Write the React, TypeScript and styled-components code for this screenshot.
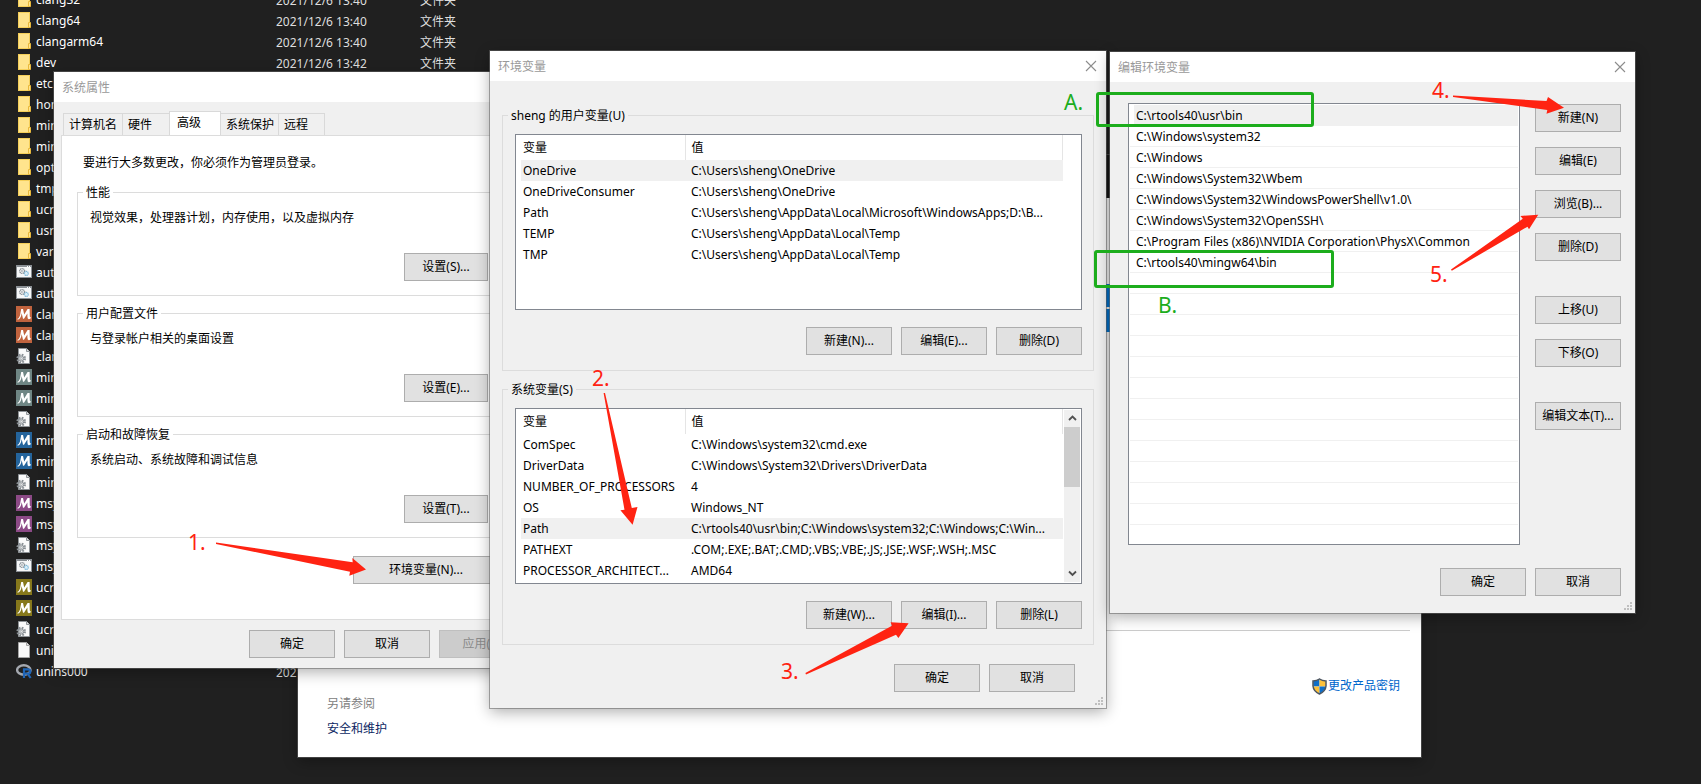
import type { ReactNode } from "react";
import styled, { createGlobalStyle } from "styled-components";

const GlobalStyle = createGlobalStyle`
  *, *::before, *::after { box-sizing: border-box; }
  body { margin: 0; background: #202020; }
  body, button, table {
    font-family: "Noto Sans", "Noto Sans CJK SC", sans-serif;
    font-size: 12px;
    line-height: 16px;
    color: #000;
  }
  button { cursor: default; }
`;

/* ---------- desktop and window frames ---------- */

const Desktop = styled.main`
  position: relative;
  height: 100vh;
  overflow: hidden;
  background: #202020;
`;

const WindowFrame = styled.section<{ $x: number; $y: number; $w: number; $h: number }>`
  position: absolute;
  left: ${(p) => p.$x}px;
  top: ${(p) => p.$y}px;
  width: ${(p) => p.$w}px;
  height: ${(p) => p.$h}px;
  display: flex;
  flex-direction: column;
  background: #f0f0f0;
  box-shadow: 0 0 0 1px rgba(100, 100, 100, 0.55), 0 4px 14px rgba(0, 0, 0, 0.32);
`;

const TitleBar = styled.header`
  flex: none;
  height: 30px;
  display: flex;
  align-items: center;
  justify-content: space-between;
  padding: 0 9px 0 8px;
  background: #fff;
`;

const Title = styled.h1`
  margin: 0;
  padding-top: 2px;
  font-size: 12px;
  font-weight: 400;
  line-height: 16px;
  color: #999;
`;

const CloseButton = styled.button`
  display: flex;
  padding: 0;
  border: 0;
  background: none;
`;

const Grip = styled.svg`
  position: absolute;
  right: 2px;
  bottom: 2px;
`;

const PushButton = styled.button<{ $width?: number }>`
  flex: none;
  width: ${(p) => p.$width ?? 86}px;
  height: 28px;
  padding: 0;
  border: 1px solid #adadad;
  background: #e1e1e1;
  white-space: nowrap;
  &:disabled {
    border-color: #bfbfbf;
    background: #ccc;
    color: #8a8a8a;
  }
`;

const ButtonRow = styled.div`
  display: flex;
  justify-content: flex-end;
  gap: 9px;
`;

/* ---------- file list ---------- */

const FileTable = styled.table`
  table-layout: fixed;
  width: 520px;
  margin-top: -11px;
  border-collapse: collapse;
`;

const FileRow = styled.tr`
  height: 21px;
`;

const FileCell = styled.td`
  height: 21px;
  padding: 2px 0 0;
  white-space: nowrap;
  color: #dedede;
`;

const FileName = styled.span`
  display: flex;
  align-items: flex-start;
  gap: 4px;
  height: 19px;
  padding-left: 16px;
  line-height: 18px;
  color: #fff;
`;

type Kind = "folder" | "batch" | "config" | "page" | "rlogo" | { tile: string };

function FileIcon({ kind }: { kind: Kind }) {
  if (typeof kind === "object") {
    return (
      <svg width="16" height="16" viewBox="0 0 16 16">
        <rect width="16" height="16" fill={kind.tile} />
        <path d="M1 13.2 Q3 12.8 4 9.5 L5.2 3 H7 L8.2 8.4 L11.6 3 H13.6 L13.8 10.6 Q14.2 11.8 15.2 11.2 Q14.6 13.2 12.8 13.2 Q11.4 13 11.4 10.5 L11.4 7.4 L8 12.8 H7 L5.7 7.2 Q4.8 12.6 2.4 13.4 Z" fill="#fff" />
      </svg>
    );
  }
  if (kind === "folder") {
    return (
      <svg width="16" height="16" viewBox="0 0 16 16">
        <rect x="2" width="12" height="16" fill="#ffe48d" />
        <rect x="2.5" y="0.5" width="11" height="15" fill="none" stroke="#f5cf59" />
        <path d="M12.5 15.5 V10.5 H14.5 V15.5 Z" fill="#ffe48d" stroke="#e9b93c" />
      </svg>
    );
  }
  if (kind === "batch") {
    return (
      <svg width="16" height="16" viewBox="0 0 16 16">
        <rect x="0.5" y="1.5" width="15" height="12" fill="#f6f7f8" stroke="#8b9095" />
        <path d="M1 2.5 H15" stroke="#8b9095" />
        <path d="M11 2.5 H12 M13 2.5 H14" stroke="#fff" />
        <circle cx="6.2" cy="7" r="2.5" fill="none" stroke="#7d858b" strokeWidth="1.2" strokeDasharray="1.2 0.6" />
        <circle cx="6.2" cy="7" r="1" fill="none" stroke="#9aa1a6" strokeWidth="0.7" />
        <circle cx="10.3" cy="9.4" r="2" fill="#d9eef9" stroke="#74b2d4" strokeWidth="1.1" strokeDasharray="1.1 0.5" />
      </svg>
    );
  }
  if (kind === "config") {
    return (
      <svg width="16" height="16" viewBox="0 0 16 16">
        <path d="M2.5 0.5 H10.5 L13.5 3.5 V15.5 H2.5 Z" fill="#fafafa" stroke="#8f9498" />
        <path d="M10.5 0.5 V3.5 H13.5" fill="#ddd" stroke="#8f9498" />
        <circle cx="5.2" cy="10.5" r="3.8" fill="none" stroke="#8a9095" strokeWidth="2" strokeDasharray="1.7 1.3" />
        <circle cx="5.2" cy="10.5" r="2.6" fill="#d5d8da" stroke="#8a9095" />
        <circle cx="5.2" cy="10.5" r="1" fill="#fff" stroke="#888e92" strokeWidth="0.6" />
      </svg>
    );
  }
  if (kind === "page") {
    return (
      <svg width="16" height="16" viewBox="0 0 16 16">
        <path d="M2.5 0.5 H10.5 L13.5 3.5 V15.5 H2.5 Z" fill="#fafafa" stroke="#a5a5a5" />
        <path d="M10.5 0.5 V3.5 H13.5" fill="#e5e5e5" stroke="#a5a5a5" />
      </svg>
    );
  }
  return (
    <svg width="16" height="16" viewBox="0 0 16 16">
      <ellipse cx="7.8" cy="7" rx="6.7" ry="4.7" fill="none" stroke="#a4a8af" strokeWidth="2.4" />
      <path d="M8 15 V6.4 H12 Q14.3 6.4 14.3 8.4 Q14.3 10.5 12 10.6 H9 M11.6 10.6 L14.6 15" fill="none" stroke="#1f65b7" strokeWidth="2.2" />
    </svg>
  );
}

const CLANG: Kind = { tile: "#c0633e" };
const MINGW: Kind = { tile: "#6f8684" };
const MINGW64: Kind = { tile: "#24649c" };
const MSYS: Kind = { tile: "#8c4a86" };
const UCRT: Kind = { tile: "#86781b" };

const files: { name: string; kind: Kind; date?: string; type?: string }[] = [
  { name: "clang32", kind: "folder", date: "2021/12/6 13:40", type: "文件夹" },
  { name: "clang64", kind: "folder", date: "2021/12/6 13:40", type: "文件夹" },
  { name: "clangarm64", kind: "folder", date: "2021/12/6 13:40", type: "文件夹" },
  { name: "dev", kind: "folder", date: "2021/12/6 13:42", type: "文件夹" },
  { name: "etc", kind: "folder" },
  { name: "home", kind: "folder" },
  { name: "mingw32", kind: "folder" },
  { name: "mingw64", kind: "folder" },
  { name: "opt", kind: "folder" },
  { name: "tmp", kind: "folder" },
  { name: "ucrt64", kind: "folder" },
  { name: "usr", kind: "folder" },
  { name: "var", kind: "folder" },
  { name: "autorebase", kind: "batch" },
  { name: "autorebase", kind: "batch" },
  { name: "clang64", kind: CLANG },
  { name: "clang64", kind: CLANG },
  { name: "clang64", kind: "config" },
  { name: "mingw32", kind: MINGW },
  { name: "mingw32", kind: MINGW },
  { name: "mingw32", kind: "config" },
  { name: "mingw64", kind: MINGW64 },
  { name: "mingw64", kind: MINGW64 },
  { name: "mingw64", kind: "config" },
  { name: "msys2", kind: MSYS },
  { name: "msys2", kind: MSYS },
  { name: "msys2", kind: "config" },
  { name: "msys2", kind: "batch" },
  { name: "ucrt64", kind: UCRT },
  { name: "ucrt64", kind: UCRT },
  { name: "ucrt64", kind: "config" },
  { name: "unins", kind: "page" },
  { name: "unins000", kind: "rlogo", date: "2021/12/6 13:40" },
];

function FileList() {
  return (
    <FileTable>
      <colgroup>
        <col style={{ width: 276 }} />
        <col style={{ width: 144 }} />
        <col />
      </colgroup>
      <tbody>
        {files.map((f, i) => (
          <FileRow key={i}>
            <FileCell>
              <FileName>
                <FileIcon kind={f.kind} />
                {f.name}
              </FileName>
            </FileCell>
            <FileCell>{f.date}</FileCell>
            <FileCell>{f.type}</FileCell>
          </FileRow>
        ))}
      </tbody>
    </FileTable>
  );
}

/* ---------- system information window ---------- */

const SystemFrame = styled(WindowFrame)`
  background: #fff;
`;

const DarkBar = styled.div`
  flex: none;
  height: 43px;
  background: #161616;
`;

const SystemContent = styled.div`
  flex: 1;
  display: flex;
  flex-direction: column;
  padding: 86px 11px 0 29px;
`;

const BlueBanner = styled.div`
  height: 48px;
  margin-left: 360px;
  background: linear-gradient(#0078d7 23px, #fff 23px 25px, #0078d7 25px);
`;

const Divider = styled.hr`
  width: 100%;
  height: 1px;
  margin: 298px 0 0;
  border: 0;
  background: #ccc;
`;

const SystemFooter = styled.div`
  display: flex;
  justify-content: space-between;
  padding: 47px 10px 0 0;
`;

const SeeAlso = styled.nav`
  display: flex;
  flex-direction: column;
  gap: 9px;
  padding-top: 18px;
  color: #808080;
`;

const NavyLink = styled.a`
  color: #0c1f62;
  text-decoration: none;
`;

const KeyLink = styled.a`
  display: flex;
  gap: 1px;
  height: 18px;
  color: #0066cc;
  text-decoration: none;
`;

function Shield() {
  return (
    <svg width="15" height="17" viewBox="0 0 15 17">
      <defs>
        <clipPath id="shield-shape">
          <path d="M7.5 1.2 Q10 3 13.8 3 V8 Q13.5 13 7.5 15.8 Q1.5 13 1.2 8 V3 Q5 3 7.5 1.2 Z" />
        </clipPath>
      </defs>
      <g clipPath="url(#shield-shape)">
        <rect width="7.5" height="8.5" fill="#0f6fc9" />
        <rect x="7.5" width="7.5" height="8.5" fill="#fdc13b" />
        <rect y="8.5" width="7.5" height="8.5" fill="#fdc13b" />
        <rect x="7.5" y="8.5" width="7.5" height="8.5" fill="#0f6fc9" />
      </g>
      <path d="M7.5 1 Q10 2.9 14 2.9 V8 Q13.6 13.2 7.5 16 Q1.4 13.2 1 8 V2.9 Q5 2.9 7.5 1 Z" fill="none" stroke="#4c5560" strokeWidth="1.5" />
    </svg>
  );
}

function SystemWindow() {
  return (
    <SystemFrame $x={298} $y={155} $w={1123} $h={602}>
      <DarkBar />
      <SystemContent>
        <BlueBanner />
        <Divider />
        <SystemFooter>
          <SeeAlso>
            <span>另请参阅</span>
            <NavyLink href="#security">安全和维护</NavyLink>
          </SeeAlso>
          <KeyLink href="#key">
            <Shield />
            更改产品密钥
          </KeyLink>
        </SystemFooter>
      </SystemContent>
    </SystemFrame>
  );
}

/* ---------- system properties window ---------- */

const TabStrip = styled.div`
  display: flex;
  align-items: flex-end;
  height: 24px;
  margin: 9px 0 0 9px;
`;

const Tab = styled.button<{ $active?: boolean; $width: number }>`
  width: ${(p) => p.$width}px;
  height: ${(p) => (p.$active ? 25 : 22)}px;
  margin: ${(p) => (p.$active ? "0 0 -1px -1px" : "0 0 0 -1px")};
  padding: ${(p) => (p.$active ? "0 0 3px 7px" : "1px 0 0 5px")};
  border: 1px solid #d9d9d9;
  border-bottom: 0;
  background: ${(p) => (p.$active ? "#fff" : "#f0f0f0")};
  text-align: left;
  white-space: nowrap;
  &:first-child { margin-left: 0; }
`;

const TabPanel = styled.div`
  display: flex;
  flex-direction: column;
  height: 485px;
  margin: 0 8px 0 7px;
  padding: 19px 14px 0 15px;
  border: 1px solid #dcdcdc;
  background: #fff;
`;

const Intro = styled.p`
  margin: 0 0 12px 6px;
`;

const GroupBox = styled.fieldset`
  min-width: 0;
  margin: 0;
  border: 1px solid #dcdcdc;
`;

const Legend = styled.legend`
  padding: 2px 3px 0;
  line-height: 16px;
`;

const SettingsGroup = styled(GroupBox)`
  display: flex;
  flex-direction: column;
  height: 113px;
  margin-bottom: 8px;
  padding: 9px 22px 14px 5px;
`;

const SettingsBody = styled.div`
  display: flex;
  flex-direction: column;
  justify-content: space-between;
  height: 71px;
  padding-left: 7px;
`;

const GroupText = styled.p`
  margin: 0;
`;

const EndButton = styled(PushButton)`
  align-self: flex-end;
`;

const EnvButton = styled(PushButton)`
  align-self: flex-end;
  margin: 10px 12px 0 0;
`;

const PropertiesFooter = styled(ButtonRow)`
  padding: 10px 9px 0 0;
`;

const settings = [
  { legend: "性能", text: "视觉效果，处理器计划，内存使用，以及虚拟内存", button: "设置(S)..." },
  { legend: "用户配置文件", text: "与登录帐户相关的桌面设置", button: "设置(E)..." },
  { legend: "启动和故障恢复", text: "系统启动、系统故障和调试信息", button: "设置(T)..." },
];

function PropertiesWindow() {
  return (
    <WindowFrame $x={54} $y={72} $w={480} $h={596}>
      <TitleBar>
        <Title>系统属性</Title>
      </TitleBar>
      <TabStrip role="tablist">
        <Tab role="tab" $width={60}>计算机名</Tab>
        <Tab role="tab" $width={48}>硬件</Tab>
        <Tab role="tab" $width={52} $active aria-selected>高级</Tab>
        <Tab role="tab" $width={59}>系统保护</Tab>
        <Tab role="tab" $width={47}>远程</Tab>
      </TabStrip>
      <TabPanel role="tabpanel">
        <Intro>要进行大多数更改，你必须作为管理员登录。</Intro>
        {settings.map((s) => (
          <SettingsGroup key={s.legend}>
            <Legend>{s.legend}</Legend>
            <SettingsBody>
              <GroupText>{s.text}</GroupText>
              <EndButton $width={84}>{s.button}</EndButton>
            </SettingsBody>
          </SettingsGroup>
        ))}
        <EnvButton $width={146}>环境变量(N)...</EnvButton>
      </TabPanel>
      <PropertiesFooter>
        <PushButton>确定</PushButton>
        <PushButton>取消</PushButton>
        <PushButton disabled>应用(A)</PushButton>
      </PropertiesFooter>
    </WindowFrame>
  );
}

/* ---------- environment variables window ---------- */

const VariablesBody = styled.div`
  display: flex;
  flex-direction: column;
  gap: 9px;
  padding: 25px 12px 0 12px;
`;

const VariablesGroup = styled(GroupBox)`
  display: flex;
  flex-direction: column;
  height: 265px;
  padding: 10px 11px 0 12px;
`;

const GroupLegend = styled(Legend)`
  margin-left: -7px;
`;

const ListBox = styled.div`
  display: flex;
  height: 176px;
  margin-bottom: 17px;
  padding: 0 3px 1px 5px;
  border: 1px solid #828790;
  background: #fff;
  overflow: hidden;
`;

const VariableTable = styled.table`
  flex: none;
  table-layout: fixed;
  width: 542px;
  height: 1px;
  border-collapse: collapse;
`;

const HeadCell = styled.th`
  height: 25px;
  padding: 0 6px 0 2px;
  border-right: 1px solid #e5e5e5;
  font-weight: 400;
  text-align: left;
`;

const VariableRow = styled.tr<{ $selected: boolean }>`
  background: ${(p) => (p.$selected ? "#f0f0f0" : "transparent")};
`;

const VariableCell = styled.td`
  height: 21px;
  padding: 1px 0 0 2px;
  white-space: nowrap;
`;

const ValueHead = styled(HeadCell)`
  padding-left: 6px;
`;

const ValueCell = styled(VariableCell)`
  padding-left: 6px;
`;

const ScrollBar = styled.div`
  display: flex;
  flex-direction: column;
  justify-content: space-between;
  width: 16px;
  margin: 1px 0 0 1px;
  background: #f0f0f0;
`;

const ScrollArrow = styled.button`
  display: flex;
  align-items: center;
  justify-content: center;
  width: 16px;
  height: 17px;
  padding: 0;
  border: 0;
  background: none;
`;

const Thumb = styled.div`
  height: 60px;
  margin-bottom: auto;
  background: #cdcdcd;
`;

const VariablesFooter = styled(ButtonRow)`
  padding: 19px 31px 0 0;
`;

type Variable = [name: string, value: string];

const userVariables: Variable[] = [
  ["OneDrive", "C:\\Users\\sheng\\OneDrive"],
  ["OneDriveConsumer", "C:\\Users\\sheng\\OneDrive"],
  ["Path", "C:\\Users\\sheng\\AppData\\Local\\Microsoft\\WindowsApps;D:\\B..."],
  ["TEMP", "C:\\Users\\sheng\\AppData\\Local\\Temp"],
  ["TMP", "C:\\Users\\sheng\\AppData\\Local\\Temp"],
];

const systemVariables: Variable[] = [
  ["ComSpec", "C:\\Windows\\system32\\cmd.exe"],
  ["DriverData", "C:\\Windows\\System32\\Drivers\\DriverData"],
  ["NUMBER_OF_PROCESSORS", "4"],
  ["OS", "Windows_NT"],
  ["Path", "C:\\rtools40\\usr\\bin;C:\\Windows\\system32;C:\\Windows;C:\\Win..."],
  ["PATHEXT", ".COM;.EXE;.BAT;.CMD;.VBS;.VBE;.JS;.JSE;.WSF;.WSH;.MSC"],
  ["PROCESSOR_ARCHITECT...", "AMD64"],
];

function CloseIcon() {
  return (
    <svg width="12" height="12" viewBox="0 0 12 12">
      <path d="M1 1 L11 11 M11 1 L1 11" stroke="#8c8c8c" strokeWidth="1.1" />
    </svg>
  );
}

function SizeGrip() {
  return (
    <Grip width="9" height="9" viewBox="0 0 9 9">
      <path d="M6 0h2v2h-2z M3 3h2v2h-2z M6 3h2v2h-2z M0 6h2v2h-2z M3 6h2v2h-2z M6 6h2v2h-2z" fill="#bfbfbf" />
    </Grip>
  );
}

function Chevron({ down }: { down?: boolean }) {
  return (
    <svg width="9" height="7" viewBox="0 0 9 7">
      <path d={down ? "M1 1.5 L4.5 5 L8 1.5" : "M1 5 L4.5 1.5 L8 5"} fill="none" stroke="#505050" strokeWidth="1.8" />
    </svg>
  );
}

interface GroupProps {
  legend: string;
  rows: Variable[];
  selected: string;
  scroll?: boolean;
  buttons: string[];
}

function VariableGroup({ legend, rows, selected, scroll, buttons }: GroupProps) {
  return (
    <VariablesGroup>
      <GroupLegend>{legend}</GroupLegend>
      <ListBox>
        <VariableTable>
          <colgroup>
            <col style={{ width: 164 }} />
            <col />
          </colgroup>
          <thead>
            <tr>
              <HeadCell>变量</HeadCell>
              <ValueHead>值</ValueHead>
            </tr>
          </thead>
          <tbody>
            {rows.map(([name, value]) => (
              <VariableRow key={name} $selected={name === selected}>
                <VariableCell>{name}</VariableCell>
                <ValueCell>{value}</ValueCell>
              </VariableRow>
            ))}
          </tbody>
        </VariableTable>
        {scroll && (
          <ScrollBar>
            <ScrollArrow aria-label="向上">
              <Chevron />
            </ScrollArrow>
            <Thumb />
            <ScrollArrow aria-label="向下">
              <Chevron down />
            </ScrollArrow>
          </ScrollBar>
        )}
      </ListBox>
      <ButtonRow>
        {buttons.map((b) => (
          <PushButton key={b}>{b}</PushButton>
        ))}
      </ButtonRow>
    </VariablesGroup>
  );
}

function VariablesWindow() {
  return (
    <WindowFrame $x={490} $y={51} $w={616} $h={657}>
      <TitleBar>
        <Title>环境变量</Title>
        <CloseButton aria-label="关闭">
          <CloseIcon />
        </CloseButton>
      </TitleBar>
      <VariablesBody>
        <VariableGroup
          legend="sheng 的用户变量(U)"
          rows={userVariables}
          selected="OneDrive"
          buttons={["新建(N)...", "编辑(E)...", "删除(D)"]}
        />
        <VariableGroup
          legend="系统变量(S)"
          rows={systemVariables}
          selected="Path"
          scroll
          buttons={["新建(W)...", "编辑(I)...", "删除(L)"]}
        />
      </VariablesBody>
      <VariablesFooter as="footer">
        <PushButton>确定</PushButton>
        <PushButton>取消</PushButton>
      </VariablesFooter>
      <SizeGrip />
    </WindowFrame>
  );
}

/* ---------- edit variable window ---------- */

const EditBody = styled.div`
  display: flex;
  gap: 15px;
  padding: 21px 14px 0 18px;
`;

const PathList = styled.ul`
  flex: 1;
  height: 442px;
  margin: 0;
  padding: 1px;
  border: 1px solid #828790;
  background: #fff;
  list-style: none;
`;

const PathItem = styled.li<{ $selected?: boolean }>`
  height: 21px;
  padding: 3px 0 1px 6px;
  border-bottom: 1px solid #f0f0f0;
  background: ${(p) => (p.$selected ? "linear-gradient(90deg, #fff 4px, #f0f0f0 4px)" : "none")};
  line-height: 16px;
  white-space: nowrap;
`;

const ButtonColumn = styled.div`
  display: flex;
  flex-direction: column;
  gap: 35px;
  padding-top: 1px;
`;

const ButtonStack = styled.div`
  display: flex;
  flex-direction: column;
  gap: 15px;
`;

const EditFooter = styled(ButtonRow)`
  padding: 23px 14px 0 0;
`;

const paths = [
  "C:\\rtools40\\usr\\bin",
  "C:\\Windows\\system32",
  "C:\\Windows",
  "C:\\Windows\\System32\\Wbem",
  "C:\\Windows\\System32\\WindowsPowerShell\\v1.0\\",
  "C:\\Windows\\System32\\OpenSSH\\",
  "C:\\Program Files (x86)\\NVIDIA Corporation\\PhysX\\Common",
  "C:\\rtools40\\mingw64\\bin",
  ...Array<string>(12).fill(""),
];

const editActions = [["新建(N)", "编辑(E)", "浏览(B)...", "删除(D)"], ["上移(U)", "下移(O)"], ["编辑文本(T)..."]];

function EditWindow() {
  return (
    <WindowFrame $x={1110} $y={52} $w={525} $h={561}>
      <TitleBar>
        <Title>编辑环境变量</Title>
        <CloseButton aria-label="关闭">
          <CloseIcon />
        </CloseButton>
      </TitleBar>
      <EditBody>
        <PathList>
          {paths.map((p, i) => (
            <PathItem key={i} $selected={i === 0}>
              {p}
            </PathItem>
          ))}
        </PathList>
        <ButtonColumn>
          {editActions.map((group) => (
            <ButtonStack key={group[0]}>
              {group.map((b) => (
                <PushButton key={b}>{b}</PushButton>
              ))}
            </ButtonStack>
          ))}
        </ButtonColumn>
      </EditBody>
      <EditFooter as="footer">
        <PushButton>确定</PushButton>
        <PushButton>取消</PushButton>
      </EditFooter>
      <SizeGrip />
    </WindowFrame>
  );
}

/* ---------- annotations drawn over the windows ---------- */

const RED = "#ff2312";
const GREEN = "#1cad1c";

const Note = styled.span<{ $x: number; $y: number; $color: string }>`
  position: absolute;
  left: ${(p) => p.$x}px;
  top: ${(p) => p.$y}px;
  font-size: 21px;
  line-height: 28px;
  color: ${(p) => p.$color};
`;

const Highlight = styled.div<{ $x: number; $y: number; $w: number; $h: number }>`
  position: absolute;
  left: ${(p) => p.$x}px;
  top: ${(p) => p.$y}px;
  width: ${(p) => p.$w}px;
  height: ${(p) => p.$h}px;
  border: 3px solid ${GREEN};
  border-radius: 3px;
`;

const Arrows = styled.svg`
  position: absolute;
  left: 0;
  top: 0;
  pointer-events: none;
`;

const arrows = [
  "216,542.4 352.7,562.3 352.3,558 366,569.5 349.3,575.7 350,571.7 216,544",
  "603.6,393 605,393 631.8,508 637.5,507 632.6,524.7 620.4,510.3 624.5,509.7",
  "805.4,673 892,625.7 890.6,622.3 908.6,623.3 898.4,638 896,634.7 806,674.4",
  "1453,95.6 1546.5,101 1548,97 1564,107.7 1546.5,113.7 1547.3,110 1453,97",
  "1451,269.6 1522.8,218.7 1520.4,216 1538.2,214.7 1529,229.3 1527.5,226.7 1451.8,270.8",
];

const notes: { text: ReactNode; x: number; y: number; color: string }[] = [
  { text: "1.", x: 188, y: 528, color: RED },
  { text: "2.", x: 592, y: 364, color: RED },
  { text: "3.", x: 781, y: 657, color: RED },
  { text: "4.", x: 1432, y: 76, color: RED },
  { text: "5.", x: 1430, y: 260, color: RED },
  { text: "A.", x: 1064, y: 88, color: GREEN },
  { text: "B.", x: 1158, y: 291, color: GREEN },
];

export default function App() {
  return (
    <>
      <GlobalStyle />
      <Desktop>
        <FileList />
        <SystemWindow />
        <PropertiesWindow />
        <VariablesWindow />
        <EditWindow />
        <Highlight $x={1096} $y={92} $w={218} $h={35} />
        <Highlight $x={1094} $y={250} $w={240} $h={38} />
        <Arrows width="1701" height="784" viewBox="0 0 1701 784">
          {arrows.map((points) => (
            <polygon key={points} points={points} fill={RED} />
          ))}
        </Arrows>
        {notes.map((n) => (
          <Note key={n.x} $x={n.x} $y={n.y} $color={n.color}>
            {n.text}
          </Note>
        ))}
      </Desktop>
    </>
  );
}
